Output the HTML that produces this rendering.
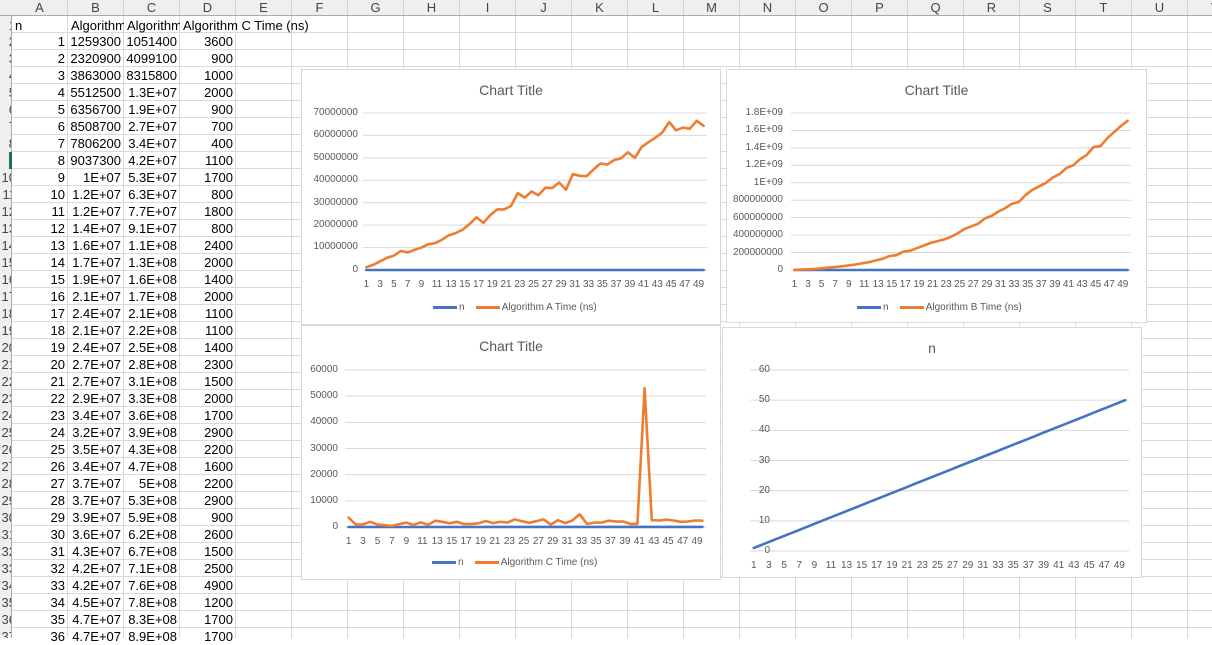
<!DOCTYPE html>
<html><head><meta charset="utf-8">
<style>
*{margin:0;padding:0;box-sizing:border-box}
body{width:1212px;height:638px;overflow:hidden;background:#fff;font-family:"Liberation Sans",Arial,sans-serif;position:relative}
.grid{position:absolute;left:12px;top:16px;width:1200px;height:622px;
background-image:repeating-linear-gradient(to right,transparent 0,transparent 55px,#dadada 55px,#dadada 56px);}
.grid2{position:absolute;left:12px;top:16.3px;width:1200px;height:622px;
background-image:repeating-linear-gradient(to bottom,transparent 0,transparent 16px,#dadada 16px,#dadada 17px);}
.colhdr{position:absolute;left:0;top:0;width:1212px;height:16px;background:#efefef;border-bottom:1px solid #ababab}
.colhdr span{position:absolute;top:0;width:56px;text-align:center;font-size:13px;line-height:15px;color:#444;border-right:1px solid #d4d4d4;height:15px}
.rowhdr{position:absolute;left:0;top:16px;width:12px;height:622px;background:#efefef;border-right:1px solid #ababab;overflow:hidden}
.rowhdr div{position:absolute;right:-5px;font-size:13px;color:#444;height:17px;line-height:17px;width:30px;text-align:right}
.cells div{position:absolute;height:17px;line-height:17px;font-size:13px;color:#000;white-space:nowrap}
.r{text-align:right;width:53px;overflow:hidden}
.chart{position:absolute;background:#fff;border:1px solid #d9d9d9}
.chart svg{position:absolute;left:0;top:0}
.ttl{position:absolute;left:0;right:0;text-align:center;font-size:14px;color:#595959}
.yl{position:absolute;font-size:10px;color:#595959;text-align:right;width:60px;line-height:10px}
.xl{position:absolute;display:flex;font-size:10px;color:#595959;line-height:10px}
.xl span{flex:1;text-align:center;white-space:nowrap;overflow:visible;width:0}
.lg{position:absolute;font-size:10px;color:#595959;line-height:10px;white-space:nowrap}
.lg i{display:inline-block;width:24px;height:3px;vertical-align:middle;margin-right:2px}
</style></head><body>
<div class="grid"></div>
<div class="grid2"></div>
<div class="colhdr">
<span style="left:12px">A</span><span style="left:68px">B</span><span style="left:124px">C</span><span style="left:180px">D</span><span style="left:236px">E</span><span style="left:292px">F</span><span style="left:348px">G</span><span style="left:404px">H</span><span style="left:460px">I</span><span style="left:516px">J</span><span style="left:572px">K</span><span style="left:628px">L</span><span style="left:684px">M</span><span style="left:740px">N</span><span style="left:796px">O</span><span style="left:852px">P</span><span style="left:908px">Q</span><span style="left:964px">R</span><span style="left:1020px">S</span><span style="left:1076px">T</span><span style="left:1132px">U</span><span style="left:1188px">V</span>
</div>
<div class="rowhdr" id="rh"></div>
<div style="position:absolute;left:9px;top:152px;width:3px;height:17px;background:#217346"></div>
<div class="cells" id="cells">
<div style="left:15px;top:16.5px">n</div>
<div style="left:71px;top:16.5px;width:53px;overflow:hidden">Algorithm B Time (ns)</div>
<div style="left:127px;top:16.5px;width:53px;overflow:hidden">Algorithm C Time (ns)</div>
<div style="left:183px;top:16.5px">Algorithm C Time (ns)</div>
</div>

<!-- Chart A -->
<div class="chart" style="left:301px;top:69px;width:420px;height:256px">
<div class="ttl" style="top:12px">Chart Title</div>
<svg width="420" height="256" id="cA"></svg>
<div class="yl" style="left:-4px;top:38px">70000000</div>
<div class="yl" style="left:-4px;top:60.4px">60000000</div>
<div class="yl" style="left:-4px;top:82.8px">50000000</div>
<div class="yl" style="left:-4px;top:105.2px">40000000</div>
<div class="yl" style="left:-4px;top:127.6px">30000000</div>
<div class="yl" style="left:-4px;top:150px">20000000</div>
<div class="yl" style="left:-4px;top:172.4px">10000000</div>
<div class="yl" style="left:-4px;top:194.8px">0</div>
<div class="xl" style="left:61px;width:344px;top:210px"><span>1</span><span></span><span>3</span><span></span><span>5</span><span></span><span>7</span><span></span><span>9</span><span></span><span>11</span><span></span><span>13</span><span></span><span>15</span><span></span><span>17</span><span></span><span>19</span><span></span><span>21</span><span></span><span>23</span><span></span><span>25</span><span></span><span>27</span><span></span><span>29</span><span></span><span>31</span><span></span><span>33</span><span></span><span>35</span><span></span><span>37</span><span></span><span>39</span><span></span><span>41</span><span></span><span>43</span><span></span><span>45</span><span></span><span>47</span><span></span><span>49</span><span></span></div>
<div class="lg" style="left:131px;top:233px"><i style="background:#4472c4"></i>n&nbsp;&nbsp;&nbsp;&nbsp;<i style="background:#ed7d31"></i>Algorithm A Time (ns)</div>
</div>

<!-- Chart B -->
<div class="chart" style="left:726px;top:69px;width:421px;height:254px">
<div class="ttl" style="top:12px">Chart Title</div>
<svg width="421" height="254" id="cB"></svg>
<div class="yl" style="left:-4px;top:38px">1.8E+09</div>
<div class="yl" style="left:-4px;top:55.4px">1.6E+09</div>
<div class="yl" style="left:-4px;top:72.9px">1.4E+09</div>
<div class="yl" style="left:-4px;top:90.3px">1.2E+09</div>
<div class="yl" style="left:-4px;top:107.8px">1E+09</div>
<div class="yl" style="left:-4px;top:125.2px">800000000</div>
<div class="yl" style="left:-4px;top:142.7px">600000000</div>
<div class="yl" style="left:-4px;top:160.1px">400000000</div>
<div class="yl" style="left:-4px;top:177.6px">200000000</div>
<div class="yl" style="left:-4px;top:195px">0</div>
<div class="xl" style="left:64px;width:340px;top:210px"><span>1</span><span></span><span>3</span><span></span><span>5</span><span></span><span>7</span><span></span><span>9</span><span></span><span>11</span><span></span><span>13</span><span></span><span>15</span><span></span><span>17</span><span></span><span>19</span><span></span><span>21</span><span></span><span>23</span><span></span><span>25</span><span></span><span>27</span><span></span><span>29</span><span></span><span>31</span><span></span><span>33</span><span></span><span>35</span><span></span><span>37</span><span></span><span>39</span><span></span><span>41</span><span></span><span>43</span><span></span><span>45</span><span></span><span>47</span><span></span><span>49</span><span></span></div>
<div class="lg" style="left:130px;top:233px"><i style="background:#4472c4"></i>n&nbsp;&nbsp;&nbsp;&nbsp;<i style="background:#ed7d31"></i>Algorithm B Time (ns)</div>
</div>

<!-- Chart C -->
<div class="chart" style="left:301px;top:325px;width:420px;height:255px">
<div class="ttl" style="top:12px">Chart Title</div>
<svg width="420" height="255" id="cC"></svg>
<div class="yl" style="left:-24px;top:39px">60000</div>
<div class="yl" style="left:-24px;top:65.2px">50000</div>
<div class="yl" style="left:-24px;top:91.3px">40000</div>
<div class="yl" style="left:-24px;top:117.5px">30000</div>
<div class="yl" style="left:-24px;top:143.7px">20000</div>
<div class="yl" style="left:-24px;top:169.8px">10000</div>
<div class="yl" style="left:-24px;top:196px">0</div>
<div class="xl" style="left:43px;width:361px;top:211px"><span>1</span><span></span><span>3</span><span></span><span>5</span><span></span><span>7</span><span></span><span>9</span><span></span><span>11</span><span></span><span>13</span><span></span><span>15</span><span></span><span>17</span><span></span><span>19</span><span></span><span>21</span><span></span><span>23</span><span></span><span>25</span><span></span><span>27</span><span></span><span>29</span><span></span><span>31</span><span></span><span>33</span><span></span><span>35</span><span></span><span>37</span><span></span><span>39</span><span></span><span>41</span><span></span><span>43</span><span></span><span>45</span><span></span><span>47</span><span></span><span>49</span><span></span></div>
<div class="lg" style="left:130px;top:232px"><i style="background:#4472c4"></i>n&nbsp;&nbsp;&nbsp;&nbsp;<i style="background:#ed7d31"></i>Algorithm C Time (ns)</div>
</div>

<!-- Chart n -->
<div class="chart" style="left:722px;top:327px;width:420px;height:251px">
<div class="ttl" style="top:12px">n</div>
<svg width="420" height="251" id="cD"></svg>
<div class="yl" style="left:-13px;top:37px">60</div>
<div class="yl" style="left:-13px;top:67.2px">50</div>
<div class="yl" style="left:-13px;top:97.3px">40</div>
<div class="yl" style="left:-13px;top:127.5px">30</div>
<div class="yl" style="left:-13px;top:157.7px">20</div>
<div class="yl" style="left:-13px;top:187.8px">10</div>
<div class="yl" style="left:-13px;top:218px">0</div>
<div class="xl" style="left:27px;width:379px;top:233px"><span>1</span><span></span><span>3</span><span></span><span>5</span><span></span><span>7</span><span></span><span>9</span><span></span><span>11</span><span></span><span>13</span><span></span><span>15</span><span></span><span>17</span><span></span><span>19</span><span></span><span>21</span><span></span><span>23</span><span></span><span>25</span><span></span><span>27</span><span></span><span>29</span><span></span><span>31</span><span></span><span>33</span><span></span><span>35</span><span></span><span>37</span><span></span><span>39</span><span></span><span>41</span><span></span><span>43</span><span></span><span>45</span><span></span><span>47</span><span></span><span>49</span><span></span></div>
</div>

<script>
(function(){
var B=["1259300","2320900","3863000","5512500","6356700","8508700","7806200","9037300","1E+07","1.2E+07","1.2E+07","1.4E+07","1.6E+07","1.7E+07","1.9E+07","2.1E+07","2.4E+07","2.1E+07","2.4E+07","2.7E+07","2.7E+07","2.9E+07","3.4E+07","3.2E+07","3.5E+07","3.4E+07","3.7E+07","3.7E+07","3.9E+07","3.6E+07","4.3E+07","4.2E+07","4.2E+07","4.5E+07","4.7E+07","4.7E+07"];
var C=["1051400","4099100","8315800","1.3E+07","1.9E+07","2.7E+07","3.4E+07","4.2E+07","5.3E+07","6.3E+07","7.7E+07","9.1E+07","1.1E+08","1.3E+08","1.6E+08","1.7E+08","2.1E+08","2.2E+08","2.5E+08","2.8E+08","3.1E+08","3.3E+08","3.6E+08","3.9E+08","4.3E+08","4.7E+08","5E+08","5.3E+08","5.9E+08","6.2E+08","6.7E+08","7.1E+08","7.6E+08","7.8E+08","8.3E+08","8.9E+08"];
var D=[3600,900,1000,2000,900,700,400,1100,1700,800,1800,800,2400,2000,1400,2000,1100,1100,1400,2300,1500,2000,1700,2900,2200,1600,2200,2900,900,2600,1500,2500,4900,1200,1700,1700];
var cells=document.getElementById('cells'),rh=document.getElementById('rh'),h='',r='';
for(var i=0;i<36;i++){var t=33.3+i*17;
h+='<div class="r" style="left:12px;top:'+t+'px">'+(i+1)+'</div><div class="r" style="left:68px;top:'+t+'px">'+B[i]+'</div><div class="r" style="left:124px;top:'+t+'px">'+C[i]+'</div><div class="r" style="left:180px;top:'+t+'px">'+D[i]+'</div>';}
cells.insertAdjacentHTML('beforeend',h);
r+='<div style="top:0.5px">1</div>';
for(var k=2;k<=37;k++)r+='<div style="top:'+(17.3+(k-2)*17)+'px">'+k+'</div>';
rh.innerHTML=r;
var A=[1.26,2.3,3.9,5.5,6.4,8.5,7.8,9,10,11.5,12,13.5,15.5,16.5,18,20.5,23.5,21,24.5,27,27,28.5,34.3,32.3,35,33.3,36.7,36.5,39,35.8,42.7,42,41.8,44.8,47.5,47,49,49.8,52.5,50,54.8,57,59,61.3,66,62.3,63.5,63,66.5,64.3];
var Bv=[1.05,4.1,8.3,13,19,27,34,42,53,63,77,91,110,130,160,170,210,220,250,280,310,330,350,380,420,470,500,530,590,620,670,710,760,780,860,920,960,1000,1060,1100,1170,1200,1270,1320,1410,1420,1510,1580,1650,1710];
var Cv=D.slice(0,36).concat([2400,2100,2100,1200,1200,53000,2600,2500,2800,2500,2000,2100,2500,2400]);
var N=[];for(i=1;i<=50;i++)N.push(i);
function chart(id,L,R,T,Bt,n,max,series){var s=document.getElementById(id),o='';
for(var j=0;j<=n;j++){var y=T+(Bt-T)*j/n;o+='<line x1="'+L+'" x2="'+R+'" y1="'+y+'" y2="'+y+'" stroke="#d9d9d9" stroke-width="1"/>';}
var w=(R-L)/50;
series.forEach(function(se){var p=[];se.d.forEach(function(v,k){p.push((L+(k+0.5)*w).toFixed(1)+','+(Bt-(Bt-T)*v/max).toFixed(1));});
o+='<polyline fill="none" stroke="'+se.c+'" stroke-width="2.6" stroke-linejoin="round" stroke-linecap="round" points="'+p.join(' ')+'"/>';});
s.innerHTML=o;}
var nA=N.map(function(x){return x/1e6;});
chart('cA',61,405,43,200,7,70,[{d:nA,c:'#4472c4'},{d:A,c:'#ed7d31'}]);
chart('cB',64,404,43,200,9,1800,[{d:N.map(function(x){return x/1e6}),c:'#4472c4'},{d:Bv,c:'#ed7d31'}]);
chart('cC',43,404,44,201,6,60000,[{d:N,c:'#4472c4'},{d:Cv,c:'#ed7d31'}]);
chart('cD',27,406,42,223,6,60,[{d:N,c:'#4472c4'}]);
})();
</script>
</body></html>
